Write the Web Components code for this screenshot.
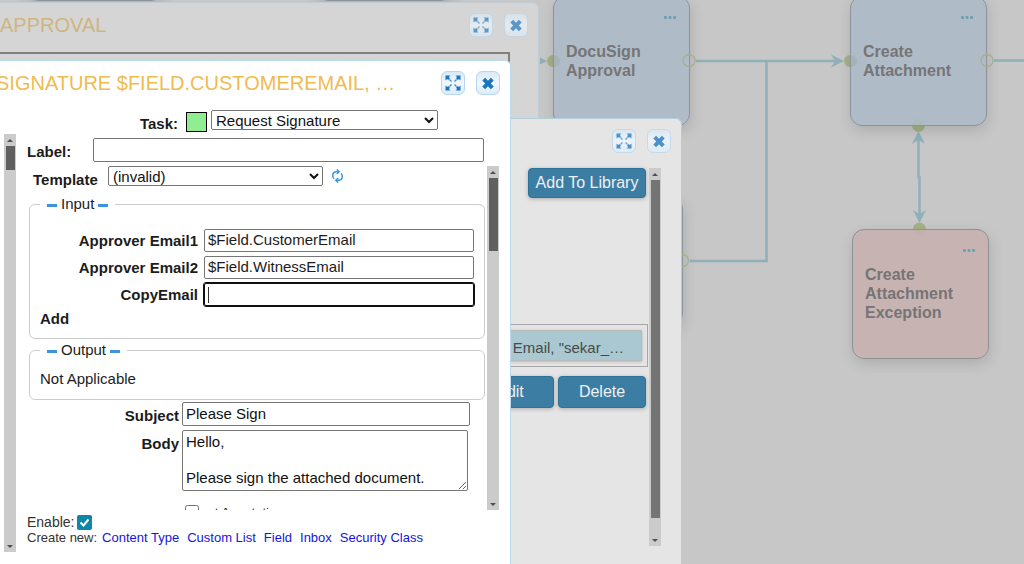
<!DOCTYPE html>
<html lang="en">
<head>
<meta charset="utf-8">
<title>Workflow designer</title>
<style>
  html, body { margin: 0; height: 100%; }
  body { font: 15px/18px "Liberation Sans", Arial, sans-serif; color: #1c1c1c; overflow: hidden; }
</style>
</head>
<body>
<workflow-app></workflow-app>

<script>
function define(name, html, setup) {
  customElements.define(name, class extends HTMLElement {
    constructor() {
      super();
      const t = document.createElement('template');
      t.innerHTML = html;
      this.attachShadow({ mode: 'open' }).append(t.content.cloneNode(true));
    }
    connectedCallback() { if (setup) setup(this, this.shadowRoot); }
  });
}

/* Step of the workflow */
define('flow-node', `
  <style>
    :host { display: flex; flex-direction: column; box-sizing: border-box; width: 137px; height: 130px;
      padding: 10px 12px; border: 1px solid #8c939b; border-radius: 12px; background: rgba(173,185,200,.9);
      box-shadow: 1px 5px 14px rgba(0,0,0,.13); color: #757575; font: bold 16px/19px "Liberation Sans", Arial, sans-serif; }
    :host([kind=error]) { background: rgba(200,176,176,.9); border-color: #8b9195; }
    svg { align-self: flex-end; display: block; margin: 9px 1px 23px 0; }
    :host([kind=error]) svg { margin-bottom: 13px; }
  </style>
  <svg width="12" height="3" fill="#6ca0b2" aria-hidden="true"><rect width="3" height="3" rx="1"/><rect x="4.5" width="3" height="3" rx="1"/><rect x="9" width="3" height="3" rx="1"/></svg>
  <div><slot></slot></div>
`);

/* Square tool button in a dialog's title bar */
define('tool-button', `
  <style>
    :host { display: block; }
    button { display: grid; place-items: center; width: 24px; height: 24px; padding: 0; border: 1px solid #b9d7ee;
      border-radius: 6px; background: linear-gradient(#d8e9f7, #f0f7fd 50%, #dcecf9); color: #1a76c0; }
    svg { display: none; width: 16px; height: 16px; }
    :host([icon=expand]) .expand, :host([icon=close]) .close { display: block; }
  </style>
  <button type="button">
    <svg class="expand" viewBox="0 0 16 16" fill="currentColor"><path d="M.5.5h5L3.900 2.100 5 3.200 3.200 5 2.100 3.900.500 5.500zM15.500.5h-5l1.600 1.600L11 3.200 12.800 5l1.100-1.100 1.600 1.600zM.5 15.500h5l-1.600-1.600L5 12.800 3.200 11l-1.100 1.100-1.600-1.600zM15.500 15.500h-5l1.600-1.600L11 12.800 12.800 11l1.100 1.100 1.600-1.600z"/><path d="M5 4l2 2-1 1-2-2zM11 4L9 6l1 1 2-2zM5 12l2-2-1-1-2 2zM11 12l-2-2 1-1 2 2z" opacity=".75"/></svg>
    <svg class="close" viewBox="0 0 16 16"><path d="M3.700 4.200l8.600 8.600M12.300 4.200l-8.600 8.600" stroke="currentColor" stroke-width="4"/></svg>
  </button>
`, (el, root) => root.querySelector('button').setAttribute('aria-label', el.getAttribute('icon')));

/* Slim scroll bar with arrow ends */
define('scroll-track', `
  <style>
    :host { display: flex; flex: none; flex-direction: column; width: 12px; box-sizing: border-box; background: #cbcbcb; }
    i { flex: none; height: 12px; display: grid; place-items: center; }
    i::after { content: ""; border: 3px solid transparent; border-top-width: 0; border-bottom: 3px solid #505050; }
    i.down::after { border-top: 3px solid #505050; border-bottom-width: 0; }
    .rail { flex: 1; }
    .thumb { width: 9px; margin: 0 auto; height: var(--thumb, 24px); background: var(--thumb-color, #606060); }
  </style>
  <i></i><div class="rail"><div class="thumb"></div></div><i class="down"></i>
`);

/* Dialog frame: title bar with tools, then the slotted body */
define('dialog-window', `
  <style>
    :host { display: flex; flex-direction: column; box-sizing: border-box; background: var(--face, #fff);
      border: 1px solid #b9d9ef; border-bottom: 0; border-radius: 6px 6px 0 0; }
    header { display: flex; gap: 11px; padding: 10px 10px 13px 0; align-items: center; opacity: var(--fade, 1); }
    h2 { flex: 1; margin: 0; font: 20px/24px "Liberation Sans", Arial, sans-serif; color: var(--title, #f0bb50); white-space: nowrap; }
    .body { flex: 1; display: flex; flex-direction: column; min-height: 0; }
  </style>
  <header><h2><slot name="title"></slot></h2><tool-button icon="expand"></tool-button><tool-button icon="close"></tool-button></header>
  <div class="body"><slot></slot></div>
`);

/* Grouped fields with a caption flanked by dashes */
define('field-group', `
  <style>
    :host { display: block; }
    fieldset { margin: 0; min-width: 0; padding: 11px 10px; border: 1px solid #ccc; border-radius: 6px; }
    legend { padding: 0 7px; display: flex; align-items: center; gap: 4px; height: 18px; }
    legend::before, legend::after { content: ""; width: 10px; height: 3px; margin-top: 2px; background: #3d94dc; }
  </style>
  <fieldset><legend></legend><slot></slot></fieldset>
`, (el, root) => root.querySelector('legend').textContent = el.getAttribute('caption'));

/* Email field with its label */
define('labelled-field', `
  <style>
    :host { display: grid; grid-template-columns: 158px 1fr; column-gap: 6px; margin-bottom: 4px; align-items: center; }
    label { font-weight: bold; text-align: right; }
    input { box-sizing: border-box; width: 100%; height: 23px; margin: 0; padding: 0 3px 2px; border: 1px solid #767676;
      border-radius: 2px; font: 15px "Liberation Sans", Arial, sans-serif; color: #1c1c1c; }
    :host([active]) input { border-color: #101010; outline: 1px solid #101010;
      background: linear-gradient(#333, #333) 3px 3px / 1px 16px no-repeat #fff; }
  </style>
  <label for="f"></label><input id="f" type="text">
`, (el, root) => {
  root.querySelector('label').textContent = el.getAttribute('label');
  root.querySelector('input').value = el.getAttribute('value') || '';
});

define('signature-form', `
  <style>
    :host { flex: 1; display: flex; flex-direction: column; min-height: 0; }
    label { font-weight: bold; }
    input, select, textarea { box-sizing: border-box; margin: 0; font: 15px/18px "Liberation Sans", Arial, sans-serif;
      color: #111; background: #fff; border: 1px solid #767676; border-radius: 2px; }
    select { height: 20px; padding: 0; }
    .task { display: flex; align-items: flex-end; height: 25px; }
    .task label { width: 182px; text-align: right; line-height: 18px; }
    .swatch { box-sizing: border-box; width: 21px; height: 20px; margin: 0 4px 1px 8px; border: 1px solid #000; background: #90ee90; }
    .task select { width: 227px; align-self: flex-start; margin-top: 2px; }
    .main { flex: 1; display: flex; min-height: 0; margin: 1px 11px 12px 8px; }
    .column { flex: 1; display: flex; flex-direction: column; min-width: 0; padding-left: 11px; }
    .name { display: flex; align-items: center; height: 32px; }
    .name label { width: 66px; padding-top: 4px; }
    .name input { flex: 1; height: 24px; margin-right: 15px; }
    .pane { flex: 1; display: flex; min-height: 0; overflow: hidden; }
    .fields { flex: 1; min-width: 0; overflow: hidden; }
    .template { display: flex; height: 29px; padding-left: 6px; }
    .template label { width: 75px; padding-top: 5px; }
    .template select { width: 215px; }
    .template svg { margin: 3px 8px; }
    field-group { margin: 0 2px 2px; }
    .emails { padding-top: 5px; }
    .add { padding: 0; border: 0; background: none; font: bold 15px/17px "Liberation Sans", Arial, sans-serif; color: #1c1c1c; display: block; }
    .row { display: grid; grid-template-columns: 152px 1fr; column-gap: 3px; margin-bottom: 4px; }
    .row label { text-align: right; padding-top: 5px; }
    .row input { width: 288px; height: 24px; padding: 0 3px 2px; }
    .row textarea { display: block; width: 286px; height: 61px; padding: 2px 3px; resize: vertical; overflow: hidden; }
    .row.note { padding-top: 10px; font-size: 13px; line-height: 16px; grid-template-columns: 172px 1fr; column-gap: 2px; }
    .note input { justify-self: end; width: 14px; height: 14px; }
    footer { height: 38px; padding-top: 4px; font-size: 13px; line-height: 16px; color: #333; }
    footer div { display: flex; align-items: center; height: 16px; }
    footer label { font-weight: normal; font-size: 14px; margin-right: 3px; }
    .tick { appearance: none; width: 15px; height: 15px; border: 0; border-radius: 2px;
      background: #0f86a8 url("data:image/svg+xml,%3Csvg xmlns='http://www.w3.org/2000/svg' viewBox='0 0 15 15'%3E%3Cpath d='M3.5 7.5l3 3 5-6' fill='none' stroke='white' stroke-width='2'/%3E%3C/svg%3E"); }
    a { color: #1414e0; text-decoration: none; margin-left: 8px; }
    span + a { margin-left: 5px; }
  </style>
  <div class="task">
    <label for="task">Task:</label><span class="swatch"></span>
    <select id="task"><option>Request Signature</option></select>
  </div>
  <div class="main">
    <scroll-track></scroll-track>
    <div class="column">
      <div class="name"><label for="name">Label:</label><input id="name" type="text"></div>
      <div class="pane">
        <div class="fields">
          <div class="template">
            <label for="tpl">Template</label>
            <select id="tpl"><option>(invalid)</option></select>
            <svg width="13" height="14" viewBox="0 0 13 14" fill="none" stroke="#3c9ade" stroke-width="1.500" aria-hidden="true"><path d="M7.500 2.700H4.600Q1.800 3.400 1.800 6v1.500q.2 1.400 1.300 2.200M5.500 11.300h2.900q2.800-.7 2.800-3.300V6.500q-.2-1.400-1.300-2.200M5.800.4l2.400 2.300-2.400 2.300M7.200 9l-2.400 2.300 2.400 2.300"/></svg>
          </div>
          <field-group caption="Input">
            <div class="emails">
              <labelled-field label="Approver Email1" value="$Field.CustomerEmail"></labelled-field>
              <labelled-field label="Approver Email2" value="$Field.WitnessEmail"></labelled-field>
              <labelled-field label="CopyEmail" active></labelled-field>
              <button type="button" class="add">Add</button>
            </div>
          </field-group>
          <field-group caption="Output">Not Applicable</field-group>
          <div class="row"><label for="subject">Subject</label><input id="subject" type="text" value="Please Sign"></div>
          <div class="row"><label for="body">Body</label><textarea id="body">Hello,

Please sign the attached document.</textarea></div>
          <div class="row note"><input id="note" type="checkbox" aria-label="set Annotation"><span>set Annotation</span></div>
        </div>
        <scroll-track style="--thumb: 73px"></scroll-track>
      </div>
      <footer>
        <div><label for="enable">Enable:</label><input id="enable" class="tick" type="checkbox" checked></div>
        <div><span>Create new:</span><a href="#">Content Type</a><a href="#">Custom List</a><a href="#">Field</a><a href="#">Inbox</a><a href="#">Security Class</a></div>
      </footer>
    </div>
  </div>
`);

define('library-panel', `
  <style>
    :host { flex: 1; display: flex; min-height: 0; margin: 2px 20px 18px 0; color: #484848; }
    .content { flex: 1; display: flex; flex-direction: column; padding-right: 1px; }
    button { box-sizing: border-box; height: 32px; padding: 0 5px; border: 1px solid #2c7299; border-radius: 4px; background: #3c7ea3;
      color: #f0f0f0; font: 16px/18px "Liberation Sans", Arial, sans-serif; box-shadow: 0 1px 4px rgba(0,0,0,.25); }
    .add { align-self: flex-end; width: 118px; height: 30px; margin-right: 2px; }
    .item { margin-top: 126px; padding: 5px; border: 1px solid #a6a6a6; text-align: right; }
    .item div { height: 21px; padding: 8px 17px 0 0; border: 1px solid #b9b9b9; background: #a9c8d2; box-shadow: 0 1px 3px rgba(0,0,0,.2); }
    .actions { display: flex; justify-content: flex-end; gap: 4px; margin: 9px 2px 0 0; }
    .actions button { width: 88px; }
    scroll-track { --thumb: 338px; --thumb-color: #747474; }
  </style>
  <div class="content">
    <button type="button" class="add">Add To Library</button>
    <div class="item"><div>Email, "sekar_…</div></div>
    <div class="actions"><button type="button">Edit</button><button type="button">Delete</button></div>
  </div>
  <scroll-track></scroll-track>
`);

define('workflow-app', `
  <style>
    :host { display: block; position: relative; min-height: 100vh; overflow: hidden; background: #c7c7c7; }
    .links { position: absolute; left: 0; top: 0; width: 100%; height: 100%; }
    flow-node, dialog-window { position: absolute; }
    .approval { left: -5px; top: 2px; bottom: 0; width: 544px; --face: #d5d5d5; --title: #ceA550; border-color: #c0cbd3; --fade: .65; }
    .frame { flex: 1; margin: 2px 28px 0 0; border: 1px solid #808080; border-width: 2px 2px 0 0; }
    .library { left: 300px; top: 118px; bottom: 0; width: 382px; --face: #e5e5e5; border-color: #b3cddd; --fade: .75; }
    .signature { left: -5px; top: 60px; bottom: 0; width: 516px; }
    .a { left: 553px; top: -4px; } .b { left: 850px; top: -4px; } .c { left: 852px; top: 229px; }
    .d { left: 546px; top: 196px; } .e { left: 26px; top: -129px; } .f { left: 316px; top: -129px; }
  </style>
  <svg class="links" aria-hidden="true">
    <g fill="none" stroke="#8fb0b9" stroke-width="2.500">
      <path d="M696 61H838M766.500 61V261H690M994 60.500H2000M918.500 140V177H919.500V214"/>
    </g>
    <g fill="#8fb0b9">
      <path d="M844 61L831 54.500L835 61L831 67.500zM540 57.500L547 61L540 64.500zM918.500 131L912 144L918.500 140L925 144zM919.500 223L913 210L919.500 214L926 210z"/>
    </g>
    <g fill="#a3b286"><circle cx="553" cy="61" r="6"/><circle cx="850" cy="61" r="6"/><circle cx="918.500" cy="125.500" r="6.500"/><circle cx="919.500" cy="229" r="6.500"/></g>
  </svg>
  <flow-node class="a">DocuSign<br>Approval</flow-node>
  <flow-node class="b">Create<br>Attachment</flow-node>
  <flow-node class="c" kind="error">Create<br>Attachment<br>Exception</flow-node>
  <flow-node class="d"></flow-node><flow-node class="e"></flow-node><flow-node class="f"></flow-node>
  <svg class="links" aria-hidden="true">
    <g fill="none" stroke="#a5af8f" stroke-width="1.300">
      <circle cx="689" cy="60.500" r="6"/><circle cx="987" cy="60.500" r="6"/><circle cx="682.500" cy="260.500" r="6"/></g>
    <g fill="#a6b0b4" opacity=".8"><path d="M554 55a6 6 0 0 1 0 12zM851 55a6 6 0 0 1 0 12z"/></g>
  </svg>

  <dialog-window class="approval"><span slot="title" style="padding-left:4px">APPROVAL</span><div class="frame"></div></dialog-window>
  <dialog-window class="library"><library-panel></library-panel></dialog-window>
  <dialog-window class="signature"><span slot="title">SIGNATURE $FIELD.CUSTOMEREMAIL, …</span><signature-form></signature-form></dialog-window>
`);
</script>
</body>
</html>
